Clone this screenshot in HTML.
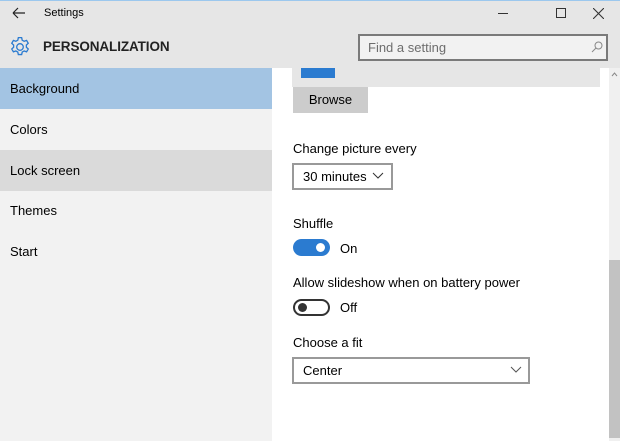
<!DOCTYPE html>
<html><head><style>
*{margin:0;padding:0;box-sizing:border-box}
body{width:620px;height:441px;overflow:hidden;font-family:"Liberation Sans",sans-serif;background:#fff;position:relative;font-size:13px;color:#000}
.a{position:absolute}
.item{position:absolute;left:0;width:272px;height:41px;padding-left:10px;line-height:41px;font-size:13px}
</style></head><body>
<div class="a" style="left:0;top:0;width:620px;height:68px;background:#e6e6e6;border-top:1px solid #9cc8ee"></div>
<svg class="a" style="left:12px;top:7px" width="14" height="12"><path d="M1 6H13M1 6L6 1M1 6L6 11" stroke="#222" fill="none" stroke-width="1.2"/></svg>
<div class="a" style="left:44px;top:7px;font-size:11px">Settings</div>
<div class="a" style="left:498px;top:13px;width:10px;height:1px;background:#333"></div>
<div class="a" style="left:556px;top:8px;width:10px;height:10px;border:1px solid #333"></div>
<svg class="a" style="left:593px;top:8px" width="11" height="11"><path d="M0 0L11 11M11 0L0 11" stroke="#333" stroke-width="1.1"/></svg>
<svg class="a" style="left:9px;top:36px" width="22" height="22" viewBox="0 0 20 20"><g fill="none" stroke="#2b7bd0" stroke-width="1.2"><circle cx="10" cy="10" r="3"/><path d="M8.5 1.5h3l.5 2.3 1.8 1 2.2-.8 1.5 2.6-1.7 1.6v2l1.7 1.6-1.5 2.6-2.2-.8-1.8 1-.5 2.3h-3l-.5-2.3-1.8-1-2.2.8-1.5-2.6 1.7-1.6v-2L2.5 6.6 4 4l2.2.8 1.8-1z"/></g></svg>
<div class="a" style="left:43px;top:39px;font-size:13.5px;font-weight:bold;color:#222;letter-spacing:-.1px">PERSONALIZATION</div>
<div class="a" style="left:358px;top:34px;width:250px;height:27px;border:2px solid #7a7a7a;background:#f2f2f2"></div>
<div class="a" style="left:368px;top:40px;font-size:13px;color:#6d6d6d">Find a setting</div>
<svg class="a" style="left:591px;top:41px" width="12" height="12"><circle cx="7.5" cy="4.5" r="3.5" fill="none" stroke="#888"/><path d="M5 7L1 11" stroke="#888"/></svg>
<div class="a" style="left:0;top:68px;width:272px;height:373px;background:#f2f2f2"></div>
<div class="item" style="top:68px;background:#a3c4e3">Background</div>
<div class="item" style="top:109px">Colors</div>
<div class="item" style="top:150px;background:#dadada">Lock screen</div>
<div class="item" style="top:190px">Themes</div>
<div class="item" style="top:231px">Start</div>
<div class="a" style="left:292px;top:68px;width:308px;height:19px;background:#e6e6e6"></div>
<div class="a" style="left:301px;top:68px;width:34px;height:10px;background:#2b7bd0"></div>
<div class="a" style="left:293px;top:87px;width:75px;height:26px;background:#cccccc;text-align:center;line-height:26px">Browse</div>
<div class="a" style="left:293px;top:141px">Change picture every</div>
<div class="a" style="left:292px;top:163px;width:101px;height:27px;border:2px solid #999;padding-left:9px;line-height:23px">30 minutes</div>
<svg class="a" style="left:372px;top:172px" width="12" height="8"><path d="M1 1L6 6L11 1" stroke="#333" fill="none"/></svg>
<div class="a" style="left:293px;top:216px">Shuffle</div>
<div class="a" style="left:293px;top:239px;width:37px;height:17px;border-radius:9px;background:#2b7bd0"></div>
<div class="a" style="left:316px;top:243px;width:9px;height:9px;border-radius:50%;background:#fff"></div>
<div class="a" style="left:340px;top:241px">On</div>
<div class="a" style="left:293px;top:275px">Allow slideshow when on battery power</div>
<div class="a" style="left:293px;top:299px;width:37px;height:17px;border-radius:9px;border:2px solid #333"></div>
<div class="a" style="left:298px;top:303px;width:9px;height:9px;border-radius:50%;background:#333"></div>
<div class="a" style="left:340px;top:300px">Off</div>
<div class="a" style="left:293px;top:335px">Choose a fit</div>
<div class="a" style="left:292px;top:357px;width:238px;height:27px;border:2px solid #999;padding-left:9px;line-height:23px">Center</div>
<svg class="a" style="left:510px;top:366px" width="12" height="8"><path d="M1 1L6 6L11 1" stroke="#555" fill="none"/></svg>
<div class="a" style="left:609px;top:68px;width:11px;height:373px;background:#f0f0f0"></div>
<div class="a" style="left:609px;top:260px;width:11px;height:178px;background:#c2c2c2"></div>
<svg class="a" style="left:611px;top:72px" width="7" height="5"><path d="M1 4L3.5 1L6 4" stroke="#888" fill="none"/></svg>
</body></html>
